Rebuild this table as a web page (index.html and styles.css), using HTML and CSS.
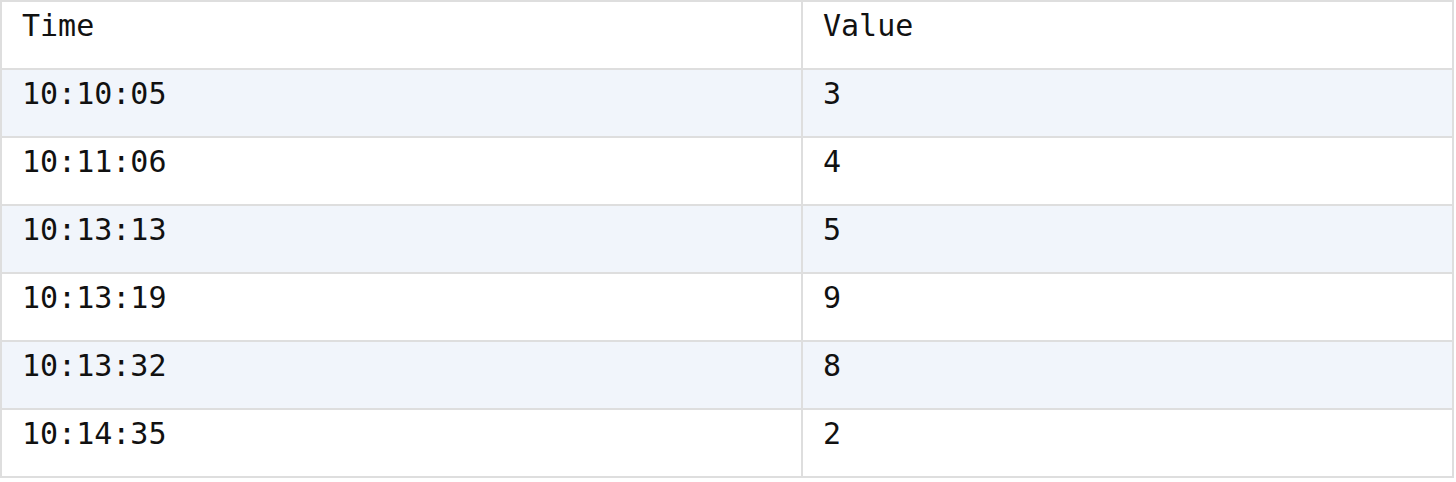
FILE: index.html
```html
<!DOCTYPE html>
<html>
<head>
<meta charset="utf-8">
<link rel="stylesheet" href="styles.css">
</head>
<body>
<table class="data">
  <colgroup><col class="c-time"><col class="c-val"></colgroup>
  <thead>
    <tr><th>Time</th><th>Value</th></tr>
  </thead>
  <tbody>
    <tr><td>10:10:05</td><td>3</td></tr>
    <tr><td>10:11:06</td><td>4</td></tr>
    <tr><td>10:13:13</td><td>5</td></tr>
    <tr><td>10:13:19</td><td>9</td></tr>
    <tr><td>10:13:32</td><td>8</td></tr>
    <tr><td>10:14:35</td><td>2</td></tr>
  </tbody>
</table>
</body>
</html>
```
FILE: styles.css
```css
html, body {
  margin: 0;
  padding: 0;
  background: #ffffff;
}
.data {
  width: 1454px;
  border-collapse: collapse;
  table-layout: fixed;
  font-family: "DejaVu Sans Mono", monospace;
  font-size: 30px;
  color: #111111;
}
.c-time { width: 801px; }
.data th,
.data td {
  border: 2px solid #dedede;
  height: 66px;
  box-sizing: border-box;
  padding: 6px 20px 0 20px;
  text-align: left;
  vertical-align: top;
  font-weight: normal;
  line-height: 35px;
}
.data tr { height: 68px; }
.data tbody tr:nth-child(odd) { background: #f1f5fb; }
.data tbody tr:nth-child(even) { background: #ffffff; }
```
